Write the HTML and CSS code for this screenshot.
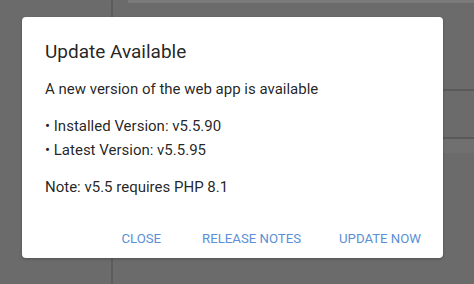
FILE: index.html
```html
<!DOCTYPE html>
<html>
<head>
<meta charset="utf-8">
<link rel="stylesheet" href="styles.css">
</head>
<body>
<div class="backdrop">
  <div class="dialog">
    <h2 class="title">Update Available</h2>
    <div class="content">
      <p class="lead">A new version of the web app is available</p>
      <ul class="list">
        <li>• Installed Version: v5.5.90</li>
        <li>• Latest Version: v5.5.95</li>
      </ul>
      <p class="note">Note: v5.5 requires PHP 8.1</p>
    </div>
    <div class="actions">
      <button class="btn btn-close">CLOSE</button>
      <button class="btn">RELEASE NOTES</button>
      <button class="btn">UPDATE NOW</button>
    </div>
  </div>
</div>
</body>
</html>
```
FILE: styles.css
```css
html, body {
  margin: 0;
  padding: 0;
  height: 100%;
}
body {
  font-family: Roboto, "Liberation Sans", sans-serif;
  background-color: #6b6b6b;
  background-image:
    linear-gradient(to right, transparent 111px, #5d5d5d 111px, #5d5d5d 113px, transparent 113px),
    linear-gradient(to bottom, #7a7a7a 0, #7a7a7a 3px, transparent 3px),
    linear-gradient(to bottom, transparent 89px, #5a5a5a 89px, #5a5a5a 91px, transparent 91px, transparent 137px, #5a5a5a 137px, #5a5a5a 139px, #707070 139px, #707070 153px, transparent 153px);
  background-size: 100% 100%, 100% 100%, 100% 100%;
  background-position: 0 0, 128px 0, 443px 0;
  background-repeat: no-repeat;
  overflow: hidden;
}
.backdrop {
  padding: 17px 0 0 22px;
}
.dialog {
  width: 421px;
  height: 241px;
  box-sizing: border-box;
  background: #fff;
  border-radius: 4px;
  box-shadow: 0 1px 3px rgba(0,0,0,0.25);
  display: flex;
  flex-direction: column;
  color: rgba(0,0,0,0.87);
}
.title {
  margin: 0;
  padding: 23px 23px 0;
  font-size: 19px;
  font-weight: 400;
  line-height: 24px;
}
.content {
  padding: 14px 23px 0;
  font-size: 15px;
  line-height: 23px;
}
.lead, .note {
  margin: 0;
}
.list {
  list-style: none;
  margin: 13px 0 14px;
  padding: 0;
  line-height: 24px;
}
.actions {
  margin-top: auto;
  display: flex;
  justify-content: flex-end;
  gap: 38px;
  padding: 0 22px 2px;
}
.btn {
  border: 0;
  background: none;
  font-family: Roboto, "Liberation Sans", sans-serif;
  font-size: 13.2px;
  color: #5b8fd6;
  padding: 0;
  height: 36px;
  letter-spacing: 0;
  cursor: pointer;
}
.btn-close {
  margin-right: 3px;
}
```
